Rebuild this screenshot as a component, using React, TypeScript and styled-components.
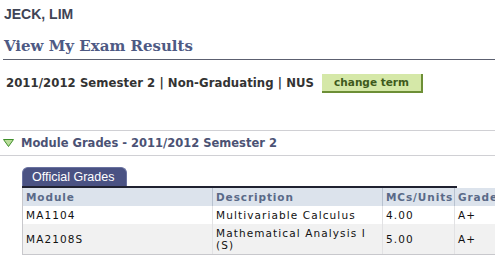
import React from "react";
import styled, { createGlobalStyle } from "styled-components";

const Global = createGlobalStyle`
  html, body {
    margin: 0;
    padding: 0;
    background: #ffffff;
    overflow: hidden;
  }
  body {
    font-family: "DejaVu Sans", Verdana, sans-serif;
  }
`;

interface Grade {
  code: string;
  description: string;
  units: string;
  grade: string;
}

const grades: Grade[] = [
  { code: "MA1104", description: "Multivariable Calculus", units: "4.00", grade: "A+" },
  { code: "MA2108S", description: "Mathematical Analysis I (S)", units: "5.00", grade: "A+" },
];

const Page = styled.div`
  width: 495px;
  height: 260px;
  overflow: hidden;
`;

const Name = styled.div`
  font-family: "Liberation Sans", Arial, sans-serif;
  font-weight: 700;
  font-size: 14px;
  color: #3f4455;
  padding: 6px 0 0 4px;
  height: 22px;
`;

const Title = styled.h1`
  margin: 0 0 0 3px;
  font-family: "DejaVu Serif", Georgia, serif;
  font-weight: 700;
  font-size: 15px;
  color: #4e5a84;
  padding: 9px 0 4px 1px;
  border-bottom: 1px solid #5c6070;
`;

const TermRow = styled.div`
  display: flex;
  align-items: center;
  gap: 8px;
  padding: 13px 0 0 6px;
  height: 20px;
`;

const TermText = styled.span`
  font-weight: 700;
  font-size: 11.7px;
  letter-spacing: 0.05px;
  color: #333333;
`;

const TermButton = styled.button`
  font-family: "DejaVu Sans", Verdana, sans-serif;
  font-weight: 700;
  font-size: 10.5px;
  color: #3f5a1c;
  background: #d5e8a8;
  border: none;
  border-right: 2px solid #6d8f36;
  border-bottom: 2px solid #6d8f36;
  width: 101px;
  height: 19px;
  padding: 0;
`;

const Section = styled.div`
  margin-top: 37px;
  border-top: 1px solid #d0d0d4;
  border-bottom: 1px solid #d0d0d4;
  display: flex;
  align-items: center;
  gap: 7px;
  height: 24px;
  padding-left: 3px;
`;

const SectionTitle = styled.span`
  font-weight: 700;
  font-size: 11.5px;
  color: #4b5274;
`;

const Tabs = styled.div`
  margin: 11px 0 0 22px;
  display: flex;
`;

const Tab = styled.div`
  font-family: "Liberation Sans", Arial, sans-serif;
  font-size: 12.5px;
  white-space: nowrap;
  color: #ffffff;
  background: #4a5283;
  border: 1px solid #6a72a0;
  border-bottom: none;
  border-radius: 6px 6px 0 0;
  height: 18px;
  line-height: 19px;
  padding: 0 12px 0 9px;
`;

const TableWrap = styled.div`
  margin-left: 22px;
  width: 473px;
`;

const TopRule = styled.div`
  width: 435px;
  height: 2px;
  background: #1f2130;
`;

const Table = styled.div`
  display: grid;
  grid-template-columns: 190px 170px 72px 41px;
  border-bottom: 1px solid #c8c8cc;
  border-left: 1px solid #c8c8cc;
`;

const HeadCell = styled.div`
  background: #dce3ec;
  color: #5a6a88;
  font-weight: 700;
  font-size: 10.5px;
  letter-spacing: 0.9px;
  height: 18px;
  line-height: 18px;
  padding-left: 3px;
  border-right: 1px solid #b8c2d0;
  white-space: nowrap;
  overflow: hidden;
`;

const Cell = styled.div<{ $alt: boolean }>`
  background: ${(p) => (p.$alt ? "#f1f1f1" : "#ffffff")};
  color: #111111;
  font-size: 10.5px;
  letter-spacing: 1.1px;
  line-height: 12px;
  padding: 3px;
  border-right: 1px solid #e2e2e4;
  display: flex;
  align-items: center;
  min-height: 12px;
`;

const TopCell = styled(Cell)`
  align-items: flex-start;
`;

const Arrow = () => (
  <svg width="11" height="8" viewBox="0 0 11 8">
    <polygon points="0.5,0.5 10.5,0.5 5.5,7.5" fill="#b9dd9a" stroke="#3f8f2a" strokeWidth="1" />
  </svg>
);

export default function App() {
  return (
    <Page>
      <Global />
      <Name>JECK, LIM</Name>
      <Title>View My Exam Results</Title>
      <TermRow>
        <TermText>2011/2012 Semester 2 | Non-Graduating | NUS</TermText>
        <TermButton>change term</TermButton>
      </TermRow>
      <Section>
        <Arrow />
        <SectionTitle>Module Grades - 2011/2012 Semester 2</SectionTitle>
      </Section>
      <Tabs>
        <Tab>Official Grades</Tab>
      </Tabs>
      <TableWrap>
        <TopRule />
        <Table>
          <HeadCell>Module</HeadCell>
          <HeadCell>Description</HeadCell>
          <HeadCell>MCs/Units</HeadCell>
          <HeadCell>Grade</HeadCell>
          {grades.map((g, i) => (
            <React.Fragment key={g.code}>
              <Cell $alt={i % 2 === 1}>{g.code}</Cell>
              <TopCell $alt={i % 2 === 1}>{g.description}</TopCell>
              <Cell $alt={i % 2 === 1}>{g.units}</Cell>
              <Cell $alt={i % 2 === 1}>{g.grade}</Cell>
            </React.Fragment>
          ))}
        </Table>
      </TableWrap>
    </Page>
  );
}
